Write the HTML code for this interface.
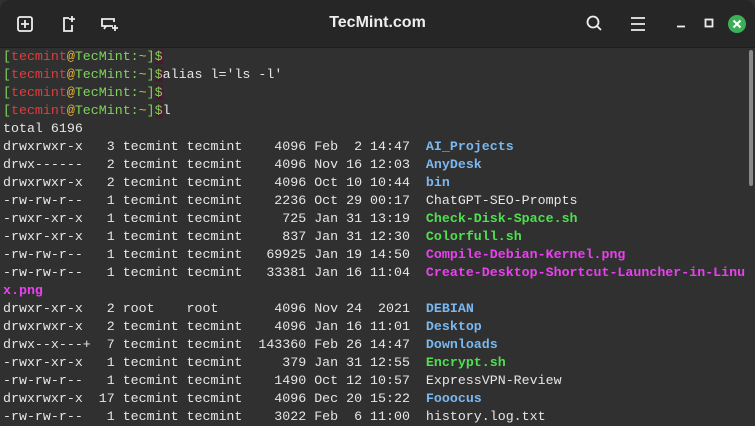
<!DOCTYPE html>
<html><head><style>
*{margin:0;padding:0;box-sizing:border-box}
body{width:755px;height:419px;overflow:hidden;background:#303030;font-family:"Liberation Mono",monospace;}
.tb{position:absolute;left:0;top:0;width:755px;height:48px;background:#262626;border-radius:10px 10px 0 0;border-bottom:1px solid #1e1e1e}
.title{position:absolute;left:0;width:755px;top:14px;text-align:center;color:#eee;font:bold 16px "Liberation Sans",sans-serif}
pre{position:absolute;left:3px;top:48px;font-size:13.3px;line-height:18px;color:#e6e6e6;font-family:"Liberation Mono",monospace}
.r{color:#e63b3b}.g{color:#7fd35a}.y{color:#e8b53a}
.b{color:#79b8f0;font-weight:bold}.gr{color:#4fe04f;font-weight:bold}.m{color:#ea40f0;font-weight:bold}
.cur{background:#4a1a30}
.sb{position:absolute;left:749px;top:50px;width:4px;height:136px;background:#8a8a8a;border-radius:2px}
</style></head><body>
<div class="tb">
<svg width="755" height="48" style="position:absolute;left:0;top:0">
<g fill="none" stroke="#eee" stroke-width="1.8">
<rect x="18" y="17" width="14" height="14" rx="2"/><path d="M25 20v8M21 24h8"/>
<path d="M69 18h-5v13h8v-6"/><path d="M72 16v6M69 19h6"/>
<path d="M113 26h-11v-7h12v3"/><path d="M106 26l-2 3"/><path d="M115 25v6M112 28h6"/>
<circle cx="593" cy="22" r="5.5"/><path d="M597 26l4 4"/>
<path d="M631 18h14M631 24h14M631 30h14"/>
<path d="M677 26.5h8"/><rect x="705.5" y="19.5" width="7" height="7"/>
</g>
<circle cx="737" cy="24" r="9" fill="#3bb057"/>
<path d="M733.5 20.5l7 7M740.5 20.5l-7 7" stroke="#fff" stroke-width="2"/>
</svg>
<div class="title">TecMint.com</div>
</div>
<div class="sb"></div>
<pre><span class="g">[</span><span class="r">tecmint</span><span class="y">@</span><span class="g">TecMint:</span><span class="y">~</span><span class="g">]</span><span class="g cur">$</span>
<span class="g">[</span><span class="r">tecmint</span><span class="y">@</span><span class="g">TecMint:</span><span class="y">~</span><span class="g">]</span><span class="g cur">$</span>alias l='ls -l'
<span class="g">[</span><span class="r">tecmint</span><span class="y">@</span><span class="g">TecMint:</span><span class="y">~</span><span class="g">]</span><span class="g cur">$</span>
<span class="g">[</span><span class="r">tecmint</span><span class="y">@</span><span class="g">TecMint:</span><span class="y">~</span><span class="g">]</span><span class="g cur">$</span>l
total 6196
drwxrwxr-x   3 tecmint tecmint    4096 Feb  2 14:47  <span class="b">AI_Projects</span>
drwx------   2 tecmint tecmint    4096 Nov 16 12:03  <span class="b">AnyDesk</span>
drwxrwxr-x   2 tecmint tecmint    4096 Oct 10 10:44  <span class="b">bin</span>
-rw-rw-r--   1 tecmint tecmint    2236 Oct 29 00:17  ChatGPT-SEO-Prompts
-rwxr-xr-x   1 tecmint tecmint     725 Jan 31 13:19  <span class="gr">Check-Disk-Space.sh</span>
-rwxr-xr-x   1 tecmint tecmint     837 Jan 31 12:30  <span class="gr">Colorfull.sh</span>
-rw-rw-r--   1 tecmint tecmint   69925 Jan 19 14:50  <span class="m">Compile-Debian-Kernel.png</span>
-rw-rw-r--   1 tecmint tecmint   33381 Jan 16 11:04  <span class="m">Create-Desktop-Shortcut-Launcher-in-Linu
x.png</span>
drwxr-xr-x   2 root    root       4096 Nov 24  2021  <span class="b">DEBIAN</span>
drwxrwxr-x   2 tecmint tecmint    4096 Jan 16 11:01  <span class="b">Desktop</span>
drwx--x---+  7 tecmint tecmint  143360 Feb 26 14:47  <span class="b">Downloads</span>
-rwxr-xr-x   1 tecmint tecmint     379 Jan 31 12:55  <span class="gr">Encrypt.sh</span>
-rw-rw-r--   1 tecmint tecmint    1490 Oct 12 10:57  ExpressVPN-Review
drwxrwxr-x  17 tecmint tecmint    4096 Dec 20 15:22  <span class="b">Fooocus</span>
-rw-rw-r--   1 tecmint tecmint    3022 Feb  6 11:00  history.log.txt</pre>
</body></html>
